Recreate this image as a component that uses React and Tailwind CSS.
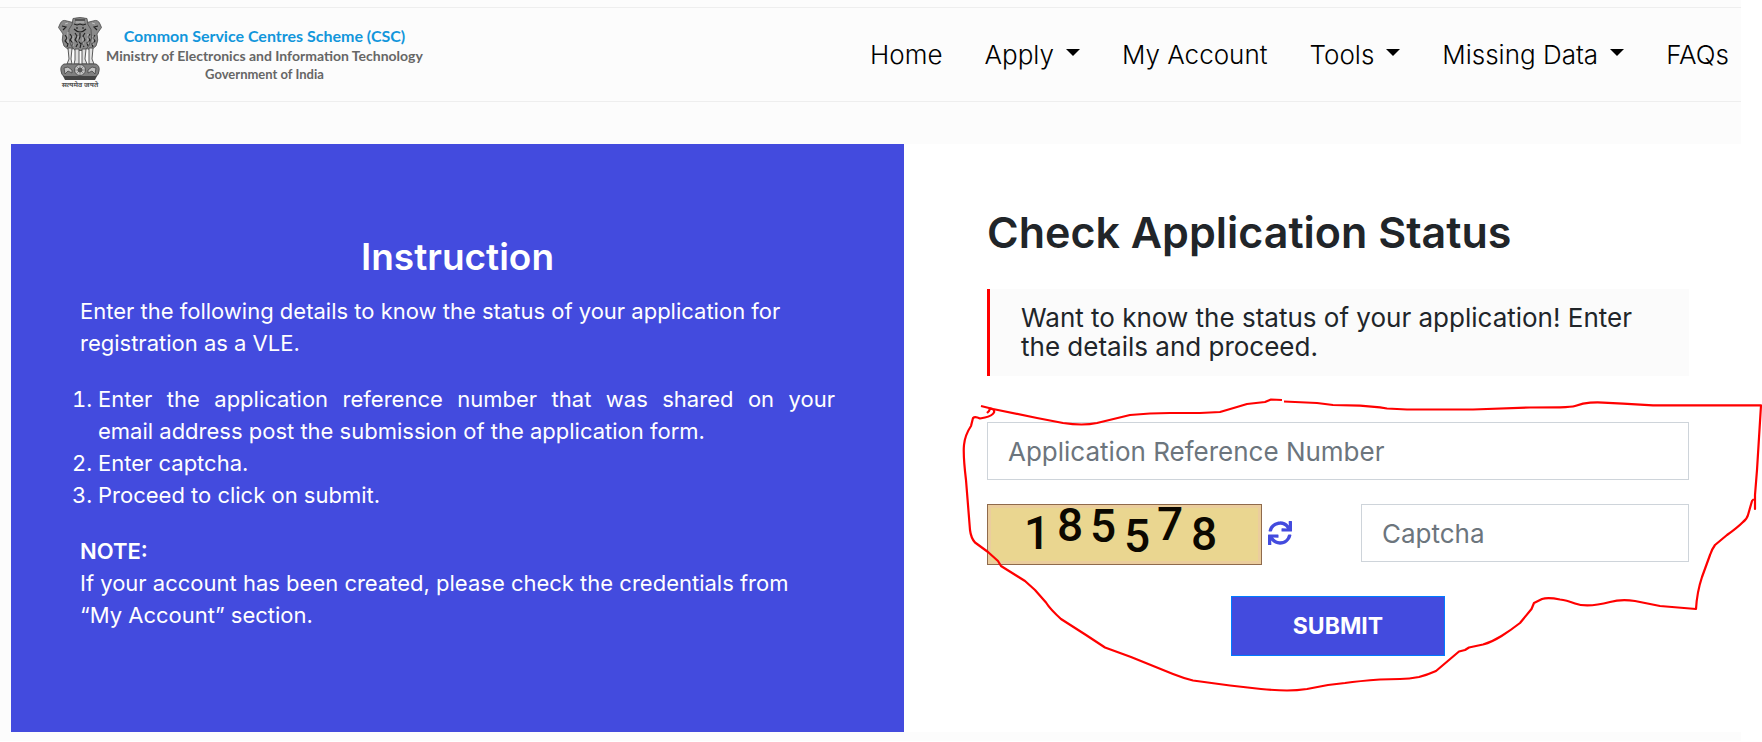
import React from "react";
import { FaSync } from "react-icons/fa";

const navItems = [
  { label: "Home" },
  { label: "Apply", menu: true },
  { label: "My Account" },
  { label: "Tools", menu: true },
  { label: "Missing Data", menu: true },
  { label: "FAQs" },
];

const captchaDigits = [
  { digit: "1", x: 50, y: 45 },
  { digit: "8", x: 83, y: 37 },
  { digit: "5", x: 116, y: 38 },
  { digit: "5", x: 150, y: 48 },
  { digit: "7", x: 183, y: 36 },
  { digit: "8", x: 217, y: 46 },
];

const Emblem = () => (
  <svg viewBox="0 0 44 64" className="h-16 w-11 shrink-0" aria-hidden="true">
    <g fill="#8a8a8a" stroke="#4a4a4a" strokeWidth="0.8">
      <path d="M9 4q-5-2-7 3l-1.500 3.500L3 14l2 3q-2 6 1 12l5 4 6-2V6z" />
      <path d="M35 4q5-2 7 3l1.500 3.500L41 14l-2 3q2 6-1 12l-5 4-6-2V6z" />
      <path d="M15 1.500q7-2 14 0l1 6 3 5q2 9-2 16l-4 5H17l-4-5q-4-7-2-16l3-5z" />
    </g>
    <g fill="none" stroke="#222" strokeWidth="1.1">
      <path d="M17 3h10M16 7l3 1 3-1 3 1 3-1M16 12q6 6 12 0M19 10v2M25 10v2M4 9l4 1-3 3M40 9l-4 1 3 3" />
      <path d="M7 18l2 3-2 3 3 3-1 3M12 17l2 3-2 3 3 3-1 3M17 16l2 3-2 4 3 3-2 4M22 16v4l-2 4 3 3-1 4M27 16l-2 3 2 4-3 3 2 4M32 17l-2 3 2 3-3 3 1 3M37 18l-2 3 2 3-3 3 1 3" />
    </g>
    <g fill="none" stroke="#d8d8d8" strokeWidth="0.7">
      <path d="M10 15v11M15 19v10M20 19v8M25 20v9M30 17v10M35 19v9M7 7l3-1M34 6l3 1M18 5h8" />
    </g>
    <g fill="#e0e0e0" stroke="#4a4a4a" strokeWidth="0.9">
      <path d="M10 31h4l-1 11 1 5H9l2-5zM17 32h4v15h-5l1-4zM24 32h4l-1 10 2 5h-5zM31 31h4l-1 11 2 5h-5z" />
      <path d="M6 47q-4 2-3 7 0 4 4 6h30q4-2 4-6 1-5-3-7z" fill="#808080" />
    </g>
    <path d="M5 59h34l-2 4H7z" fill="#444" />
    <g fill="#c2c2c2" stroke="#444" strokeWidth="0.8">
      <circle cx="22" cy="53" r="5.500" />
      <circle cx="22" cy="53" r="2" fill="#666" />
      <path d="M6 51l4-1 4 3v3l-4-2-3 3zM38 51l-4-1-4 3v3l4-2 3 3z" />
    </g>
    <path d="M22 48v10M17 53h10M18.500 49.500l7 7M25.500 49.500l-7 7" stroke="#555" strokeWidth="0.5" />
  </svg>
);

const Header = () => (
  <header className="mt-[7px] flex h-[95px] items-center justify-between border-y border-[#eeeeee] pr-3 pl-[58px]">
    <a href="#" className="flex items-center gap-1 font-[Lato,sans-serif] font-bold">
      <span className="flex flex-col items-center pb-1">
        <Emblem />
        <span className="font-['Noto_Sans',sans-serif] text-[7px] leading-[8px] text-[#555555]">सत्यमेव जयते</span>
      </span>
      <span className="flex flex-col items-center text-[#666666]">
        <span className="text-[16px] leading-5 text-[#1296db]">Common Service Centres Scheme (CSC)</span>
        <span className="text-[14px] leading-[19px]">Ministry of Electronics and Information Technology</span>
        <span className="text-[13px] leading-[19px]">Government of India</span>
      </span>
    </a>
    <nav className="flex items-center gap-[42px] text-[26px] font-light text-black">
      {navItems.map(({ label, menu }) => (
        <a key={label} href="#" className="flex items-center gap-3 whitespace-nowrap">
          {label}
          {menu && <span className="mb-1 border-x-7 border-t-7 border-x-transparent border-t-black" />}
        </a>
      ))}
    </nav>
  </header>
);

const Instructions = () => (
  <section className="bg-[#434bde] px-[69px] pt-[87px] pb-[101px] text-[22px] leading-8 text-white">
    <h2 className="mb-3 text-center text-[37px] leading-[52px] font-semibold">Instruction</h2>
    <p className="mb-6">
      Enter the following details to know the status of your application for registration as a VLE.
    </p>
    <ol className="mb-6 list-decimal pl-[18px] text-justify">
      <li>
        Enter the application reference number that was shared on your email&nbsp;address post the
        submission of the application form.
      </li>
      <li>Enter captcha.</li>
      <li>Proceed to click on submit.</li>
    </ol>
    <p>
      <strong className="font-semibold">NOTE:</strong>
      <br />
      If your account has been created, please check the credentials from “My&nbsp;Account” section.
    </p>
  </section>
);

const Captcha = () => (
  <svg
    viewBox="0 0 275 61"
    className="h-[61px] w-[275px] shrink-0 overflow-visible"
    role="img"
    aria-label="Captcha image"
  >
    <rect width="275" height="61" fill="#8f6a4c" />
    <rect x="1" y="1" width="273" height="59" fill="#ebcd9d" />
    <rect x="4" y="4" width="267" height="53" fill="#ead690" />
    {captchaDigits.map(({ digit, x, y }) => (
      <text
        key={x}
        x={x}
        y={y}
        textAnchor="middle"
        fill="#0c0800"
        className="font-[Roboto,sans-serif] text-[46px] font-medium"
      >
        {digit}
      </text>
    ))}
  </svg>
);

const inputClass =
  "h-[58px] w-full border border-[#ced4da] bg-white px-5 text-[26px] text-[#495057] placeholder:text-[#6c757d]";

const StatusForm = () => (
  <section className="bg-white pt-[59px] pr-[52px] pl-[83px] text-[#212529]">
    <h1 className="text-[43px] leading-[58px] font-semibold">Check Application Status</h1>
    <p className="mt-7 border-l-3 border-[#ff0000] bg-[#fbfbfb] pt-[14px] pr-8 pb-[15px] pl-[31px] text-[26px] leading-[29px]">
      Want to know the status of your application! Enter the&nbsp;details and proceed.
    </p>
    <form className="mt-[46px]" onSubmit={(e) => e.preventDefault()}>
      <input className={inputClass} placeholder="Application Reference Number" aria-label="Application Reference Number" />
      <div className="mt-6 flex items-start justify-between">
        <div className="flex items-center gap-1.5">
          <Captcha />
          <button type="button" aria-label="Reload captcha" className="pb-1 text-[24px] text-[#434bde]">
            <FaSync />
          </button>
        </div>
        <div className="w-[328px]">
          <input className={inputClass} placeholder="Captcha" aria-label="Captcha" />
        </div>
      </div>
      <button
        type="submit"
        className="mx-auto mt-[31px] block h-[60px] w-[214px] border border-[#007bff] bg-[#434bde] text-[23px] font-bold text-white"
      >
        SUBMIT
      </button>
    </form>
  </section>
);

// Hand-drawn pen stroke that floats over the form
const PenMark = () => (
  <svg
    viewBox="960 395 802 300"
    className="pointer-events-none absolute top-[395px] right-0 h-[300px] w-[802px]"
    fill="none"
    stroke="#ff0000"
    strokeWidth="2.2"
    strokeLinejoin="round"
    aria-hidden="true"
  >
    <path d="M981 406 993 409 1037 418 1063 423Q1083 426 1097 423L1130 415Q1150 413 1170 413T1200 413L1220 412 1237 407 1247 404 1265 402 1271 399.500 1282 400" />
    <path d="M1284 401.500 1317 403 1333 405 1360 405.700 1380 407.300 1387 408.500 1407 409.500H1473L1530 407.500 1560 407.300Q1572 407 1575 406L1583 403.600Q1593 402 1603 402.600L1623 403.700 1653 405.300H1761L1757 470 1755 495V509V499Q1753 499 1752 501L1748 515Q1747 519 1743 522 1737 528 1727 535L1715 545Q1712 549 1710 555L1702 577Q1697 592 1696 609L1660 606Q1645 603 1635 601 1621 599 1610 602 1587 608 1575 603.500 1566 600 1560 599.500 1548 597 1542 599L1534 603 1531.500 609 1520 623Q1511 630 1501.500 636 1492 642 1483 644.500L1469 647.500 1465 650 1459 651.500 1436 671Q1427 675 1419 677 1409 679 1400 679L1380 679.500Q1359 681 1345 683L1328 685 1307 689Q1297 690.500 1287 690.500T1261 689L1230 685.500 1193 680.500Q1183 678 1173 674L1131 657 1105 647.500 1086 635 1061 619Q1050 609 1046 602.500L1035 590 1025 581 1001 566 998 561 988 552 975 542.500Q971 538 970 530L966 480Q963 455 964 445 965 435 971 426L973 418Q975 416 980 418.500L985 417.500Q992 416 994 412.500 995 409 990 408.700L989 411 987 413" />
  </svg>
);

const App = () => (
  <div className="relative overflow-hidden bg-white pr-[21px] font-[Inter,sans-serif]">
    <div className="flow-root bg-[#fcfcfc] pb-[9px]">
      <Header />
      <main className="mt-[42px] ml-[11px] grid grid-cols-[893fr_837fr]">
        <Instructions />
        <StatusForm />
      </main>
    </div>
    <PenMark />
  </div>
);

export default App;
